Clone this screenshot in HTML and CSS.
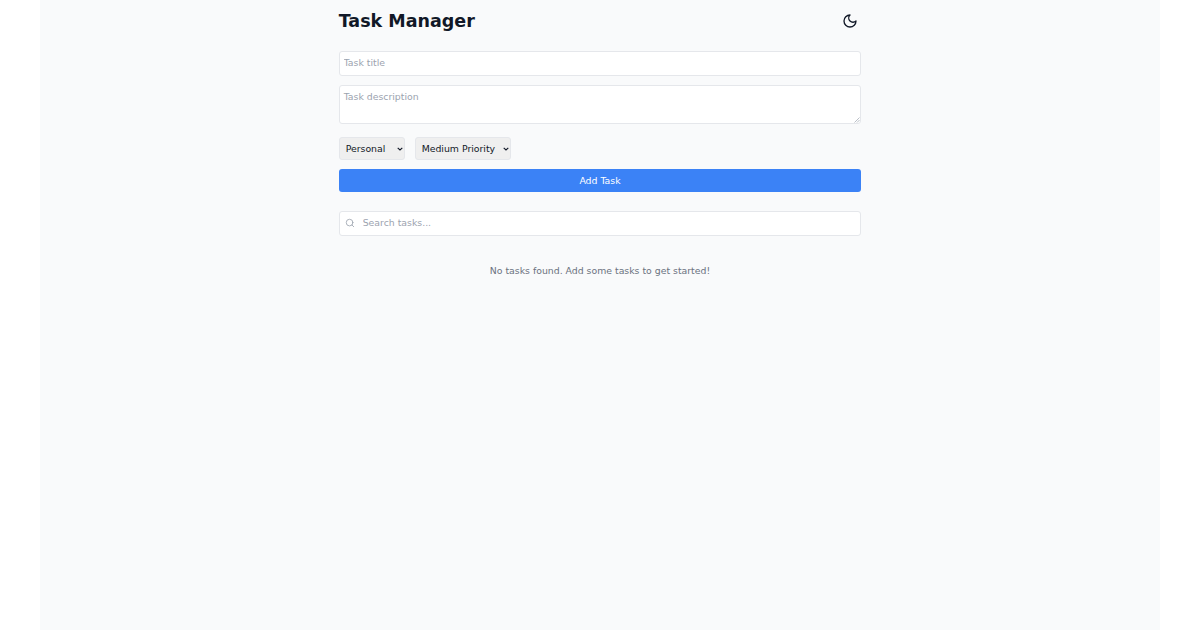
FILE: index.html
```html
<!DOCTYPE html>
<html lang="en">
<head>
    <meta charset="UTF-8">
    <meta name="viewport" content="width=device-width, initial-scale=1.0">
    <title>Task Manager</title>
    <link rel="stylesheet" href="styles.css">
</head>
<body>

    <div class="page">
        <div class="app">
            <header class="app-header">
                <h1>Task Manager</h1>
                <button class="theme-toggle" aria-label="Toggle theme">
                    <svg width="16" height="16" viewBox="0 0 24 24" fill="none" stroke="currentColor" stroke-width="2" stroke-linecap="round" stroke-linejoin="round">
                        <path d="M12 3a6 6 0 0 0 9 9 9 9 0 1 1-9-9Z"></path>
                    </svg>
                </button>
            </header>

            <form class="task-form">
                <input class="field" type="text" placeholder="Task title">
                <div class="area-wrap">
                    <textarea class="field field-area" placeholder="Task description"></textarea>
                    <svg class="grip" width="6" height="6" viewBox="0 0 6 6" fill="none" stroke="#9ca3af" stroke-width="0.7">
                        <path d="M0.5 5.5 5.5 0.5M3 5.5 5.5 3"></path>
                    </svg>
                </div>
                <div class="select-row">
                    <select class="select select-category">
                        <option>Personal</option>
                        <option>Work</option>
                    </select>
                    <select class="select select-priority">
                        <option>Medium Priority</option>
                        <option>High Priority</option>
                        <option>Low Priority</option>
                    </select>
                </div>
                <button class="add-btn" type="button">Add Task</button>
            </form>

            <div class="search">
                <svg class="search-icon" width="10" height="10" viewBox="0 0 24 24" fill="none" stroke="currentColor" stroke-width="2" stroke-linecap="round" stroke-linejoin="round">
                    <circle cx="11" cy="11" r="8"></circle>
                    <path d="m21 21-4.3-4.3"></path>
                </svg>
                <input class="field search-input" type="text" placeholder="Search tasks...">
            </div>

            <p class="empty">No tasks found. Add some tasks to get started!</p>
        </div>
    </div>

</body>
</html>
```

FILE: styles.css
```css
* {
    margin: 0;
    padding: 0;
    box-sizing: border-box;
}

body {
    font-family: "DejaVu Sans", sans-serif;
    background: #fff;
    height: 100vh;
    overflow: hidden;
}

.page {
    width: 1120px;
    height: 100%;
    margin: 0 auto;
    background: #f9fafb;
}

.app {
    width: 522.67px;
    margin: 0 auto;
}

.app-header {
    display: flex;
    justify-content: space-between;
    align-items: center;
    height: 42px;
    margin-bottom: 9px;
}

h1 {
    font-size: 17.5px;
    font-weight: 700;
    color: #111827;
}

.theme-toggle {
    display: flex;
    align-items: center;
    justify-content: center;
    width: 24px;
    height: 24px;
    margin-right: -0.67px;
    background: none;
    border: none;
    color: #111827;
    cursor: pointer;
}

.task-form {
    display: flex;
    flex-direction: column;
}

.field {
    display: block;
    width: 100%;
    height: 25px;
    padding: 0 4px 2px;
    font-family: inherit;
    font-size: 9.33px;
    color: #111827;
    background: #fff;
    border: 1px solid #e5e7eb;
    border-radius: 3px;
    outline: none;
}

.field::placeholder {
    color: #9ca3af;
    opacity: 1;
}

.area-wrap {
    position: relative;
    margin-top: 9px;
}

.field-area {
    height: 39px;
    padding: 5px 4px;
    resize: none;
}

.grip {
    position: absolute;
    right: 1px;
    bottom: 1px;
}

.select-row {
    display: flex;
    gap: 9.33px;
    margin-top: 13px;
}

.select {
    height: 23px;
    padding: 0 6px;
    font-family: inherit;
    font-size: 9.33px;
    color: #111827;
    background: #efefef url("data:image/svg+xml,%3Csvg xmlns='http://www.w3.org/2000/svg' width='6' height='4' viewBox='0 0 6 4'%3E%3Cpath d='M.7.8 3 3l2.3-2.2' fill='none' stroke='%23111827' stroke-width='1.1'/%3E%3C/svg%3E") no-repeat right 1.5px center;
    border: 1px solid #e5e7eb;
    border-radius: 3px;
    appearance: none;
}

.select-category {
    width: 66.67px;
}

.select-priority {
    width: 96.67px;
}

.add-btn {
    height: 23px;
    margin-top: 9px;
    font-family: inherit;
    font-size: 9.33px;
    color: #fff;
    background: #3b82f6;
    border: none;
    border-radius: 3px;
    cursor: pointer;
}

.search {
    position: relative;
    margin-top: 19px;
}

.search-icon {
    position: absolute;
    left: 6.5px;
    top: 7px;
    color: #9ca3af;
}

.search-input {
    padding-left: 23px;
}

.empty {
    margin-top: 27.5px;
    font-size: 9.33px;
    line-height: 14px;
    text-align: center;
    color: #6b7280;
}
```
